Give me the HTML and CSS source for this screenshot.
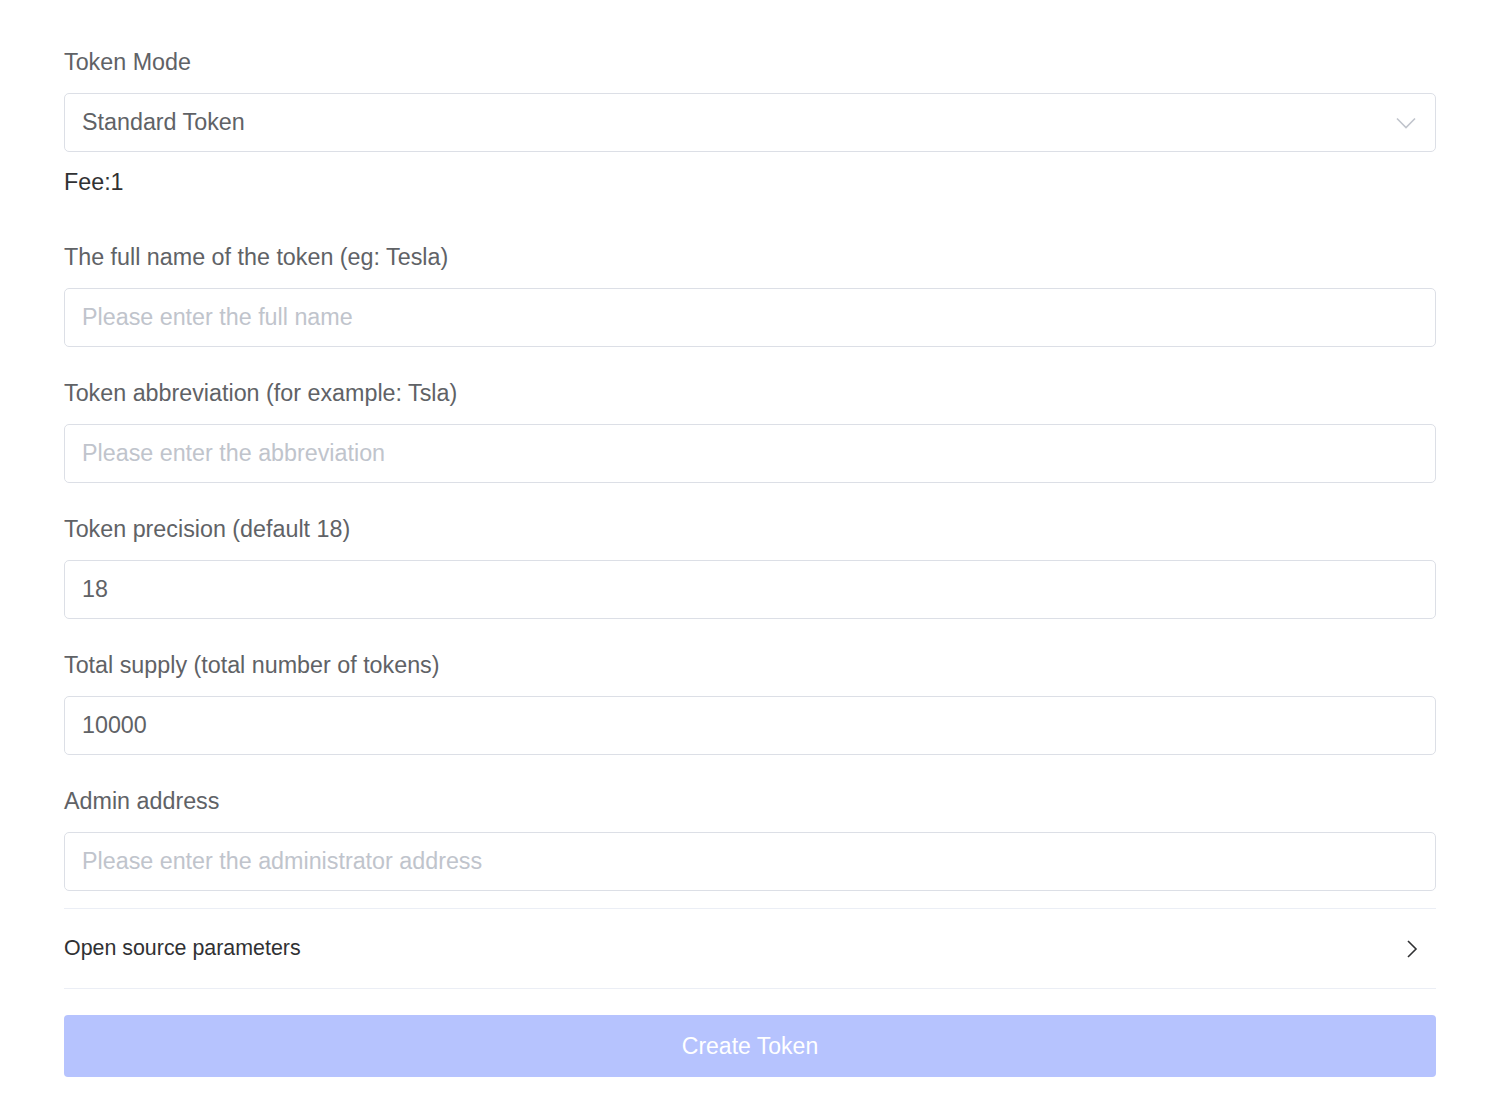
FILE: index.html
```html
<!DOCTYPE html>
<html lang="en">
<head>
    <meta charset="UTF-8">
    <meta name="viewport" content="width=device-width, initial-scale=1.0">
    <title>Create Token</title>
    <link rel="stylesheet" href="styles.css">
</head>
<body>
    <form class="token-form">
        <div class="form-item">
            <label class="form-label">Token Mode</label>
            <div class="select-box">
                <span class="select-value">Standard Token</span>
                <svg class="select-arrow" width="20" height="12" viewBox="0 0 20 12" fill="none">
                    <path d="M1 1.5l9 9 9-9" stroke="#c0c4cc" stroke-width="1.6"/>
                </svg>
            </div>
            <div class="fee">Fee:1</div>
        </div>

        <div class="form-item">
            <label class="form-label">The full name of the token (eg: Tesla)</label>
            <input class="form-input" type="text" placeholder="Please enter the full name">
        </div>

        <div class="form-item">
            <label class="form-label">Token abbreviation (for example: Tsla)</label>
            <input class="form-input" type="text" placeholder="Please enter the abbreviation">
        </div>

        <div class="form-item">
            <label class="form-label">Token precision (default 18)</label>
            <input class="form-input" type="text" value="18">
        </div>

        <div class="form-item">
            <label class="form-label">Total supply (total number of tokens)</label>
            <input class="form-input" type="text" value="10000">
        </div>

        <div class="form-item last">
            <label class="form-label">Admin address</label>
            <input class="form-input" type="text" placeholder="Please enter the administrator address">
        </div>

        <div class="collapse-row">
            <span>Open source parameters</span>
            <svg width="12" height="18" viewBox="0 0 12 18" fill="none">
                <path d="M2 1l8 8-8 8" stroke="#303133" stroke-width="1.6"/>
            </svg>
        </div>

        <button type="button" class="create-btn">Create Token</button>
    </form>
</body>
</html>
```

FILE: styles.css
```css
* {
    margin: 0;
    padding: 0;
    box-sizing: border-box;
}

body {
    font-family: 'Liberation Sans', Arial, Helvetica, sans-serif;
    background: #ffffff;
    color: #606266;
}

.token-form {
    padding: 47px 60px 0 64px;
    display: flex;
    flex-direction: column;
}

.form-item {
    display: flex;
    flex-direction: column;
    margin-bottom: 31px;
}

.form-item.last {
    margin-bottom: 17px;
}

.form-label {
    font-size: 23.3px;
    line-height: 30px;
    color: #606266;
    margin-bottom: 16px;
}

.select-box,
.form-input {
    height: 59px;
    border: 1px solid #dcdfe6;
    border-radius: 5px;
    background: #fff;
    font-family: inherit;
    font-size: 23.3px;
    color: #606266;
    padding: 0 17px;
    outline: none;
}

.select-box {
    display: flex;
    align-items: center;
    justify-content: space-between;
    padding-right: 19px;
}

.form-input::placeholder {
    color: #c0c4cc;
}

.fee {
    margin-top: 15px;
    font-size: 23.3px;
    line-height: 30px;
    color: #303133;
    margin-bottom: 14px;
}

.collapse-row {
    height: 81px;
    border-top: 1px solid #ebeef5;
    border-bottom: 1px solid #ebeef5;
    display: flex;
    align-items: center;
    justify-content: space-between;
    padding-right: 18px;
    font-size: 21.4px;
    color: #303133;
}

.create-btn {
    margin-top: 26px;
    height: 62px;
    border: none;
    border-radius: 4px;
    background: #b6c3fe;
    color: #ffffff;
    font-family: inherit;
    font-size: 23px;
}
```
